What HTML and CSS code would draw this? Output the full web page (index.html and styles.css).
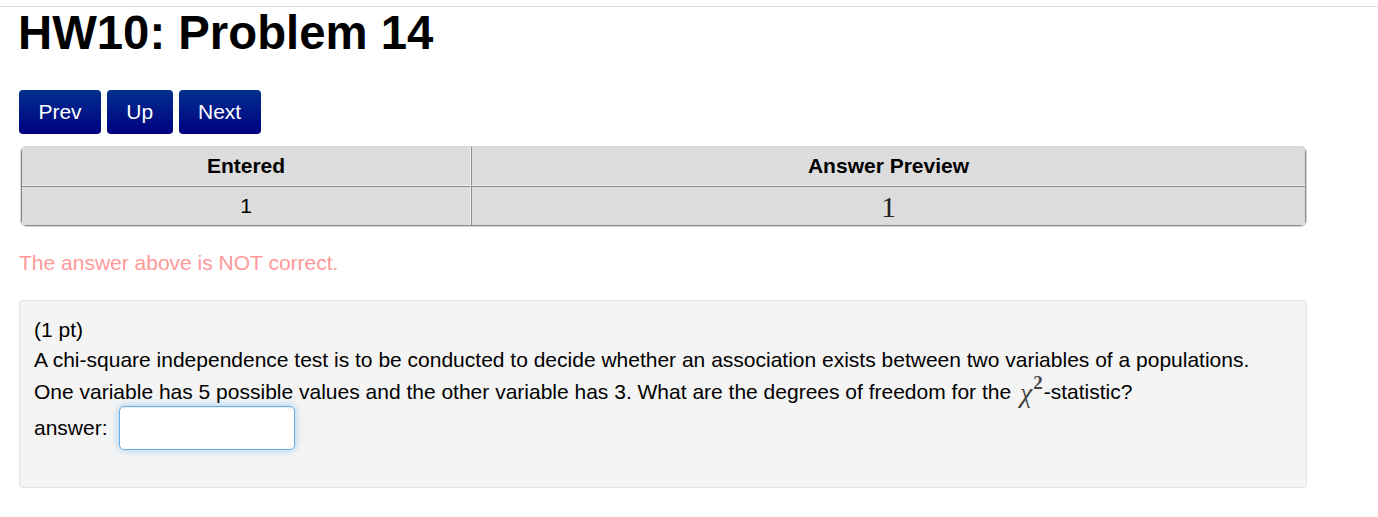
FILE: index.html
```html
<!DOCTYPE html>
<html>
<head>
<meta charset="utf-8">
<link rel="stylesheet" href="styles.css">
<title>HW10: Problem 14</title>
</head>
<body>
<div class="topline"></div>
<div class="page">
  <h1 class="title">HW10: Problem 14</h1>
  <div class="nav">
    <a class="btn">Prev</a>
    <a class="btn">Up</a>
    <a class="btn">Next</a>
  </div>
  <div class="results">
    <div class="results-inner">
      <div class="cell head c1">Entered</div>
      <div class="cell head c2">Answer Preview</div>
      <div class="cell body c1">1</div>
      <div class="cell body c2"><span class="mathnum">1</span></div>
    </div>
  </div>
  <div class="incorrect">The answer above is NOT correct.</div>
  <div class="problem">
    <div class="line">(1 pt)</div>
    <div class="line">A chi-square independence test is to be conducted to decide whether an association exists between two variables of a populations.</div>
    <div class="line line3">One variable has 5 possible values and the other variable has 3. What are the degrees of freedom for the <span class="math"><span class="chi">χ</span><span class="sup">2</span></span>-statistic?</div>
    <div class="answer-row">
      <span class="label">answer:</span>
      <input class="answer" type="text">
    </div>
  </div>
</div>
</body>
</html>
```

FILE: styles.css
```css
html, body {
  margin: 0;
  padding: 0;
  background: #fff;
}
body {
  font-family: "Liberation Sans", Arial, sans-serif;
  font-size: 21px;
  line-height: 29.7px;
  color: #000;
}
.topline {
  height: 6px;
  border-bottom: 1px solid #dddddd;
}
.page {
  padding-left: 19px;
}
.title {
  margin: 0 0 31.5px -1px;
  font-size: 47.3px;
  line-height: 51.5px;
  font-weight: bold;
}
.nav {
  display: flex;
  gap: 6px;
}
.btn {
  display: block;
  padding: 7px 19.4px;
  line-height: 30px;
  color: #fff;
  font-size: 21px;
  border-radius: 4px;
  background: linear-gradient(to bottom, #003090 0%, #000080 100%);
  cursor: pointer;
}
.results {
  margin: 12px 0 0 1px;
  width: 1287px;
  box-sizing: border-box;
  border: 1px solid #d6d6d6;
  border-radius: 6px;
  overflow: hidden;
}
.results-inner {
  display: grid;
  grid-template-columns: 449px 1fr;
  border: 1px solid #8a8a8a;
  border-top: 0;
  border-radius: 0 5px 5px 5px;
  background: #dcdcdc;
}
.cell {
  display: flex;
  align-items: center;
  justify-content: center;
  height: 38px;
  background: #dcdcdc;
}
.head {
  font-weight: bold;
  border-bottom: 1px solid #f2f2f2;
}
.body {
  border-top: 1px solid #8a8a8a;
}
.c1 {
  border-right: 1px solid #f2f2f2;
}
.c2 {
  border-left: 1px solid #8a8a8a;
}
.mathnum {
  font-family: "Liberation Serif", "Times New Roman", serif;
  font-size: 30px;
  color: #222;
  position: relative;
  top: 1px;
}
.incorrect {
  margin-top: 21px;
  color: #ff9999;
}
.problem {
  margin-top: 22px;
  width: 1288px;
  box-sizing: border-box;
  background: #f4f4f4;
  border: 1px solid #e3e3e3;
  border-radius: 4px;
  padding: 14.5px 14px 37px 14px;
}
.line3 {
  padding-top: 2px;
}
.math {
  font-family: "Liberation Serif", "Times New Roman", serif;
  color: #444;
  line-height: 0;
  margin-left: 3px;
}
.chi {
  font-style: italic;
  font-size: 28px;
  position: relative;
  top: 3px;
}
.sup {
  font-size: 19px;
  font-weight: bold;
  position: relative;
  top: -10px;
  margin-left: 1px;
  margin-right: 1px;
}
.answer-row {
  display: flex;
  align-items: center;
  gap: 11px;
}
.answer {
  width: 176px;
  height: 44px;
  box-sizing: border-box;
  border: 1px solid #66afe9;
  border-radius: 5px;
  background: #fff;
  outline: none;
  box-shadow: inset 0 1px 1px rgba(0,0,0,0.075), 0 0 8px rgba(102,175,233,0.6);
  font-size: 21px;
  padding: 6px 10px;
}
```
